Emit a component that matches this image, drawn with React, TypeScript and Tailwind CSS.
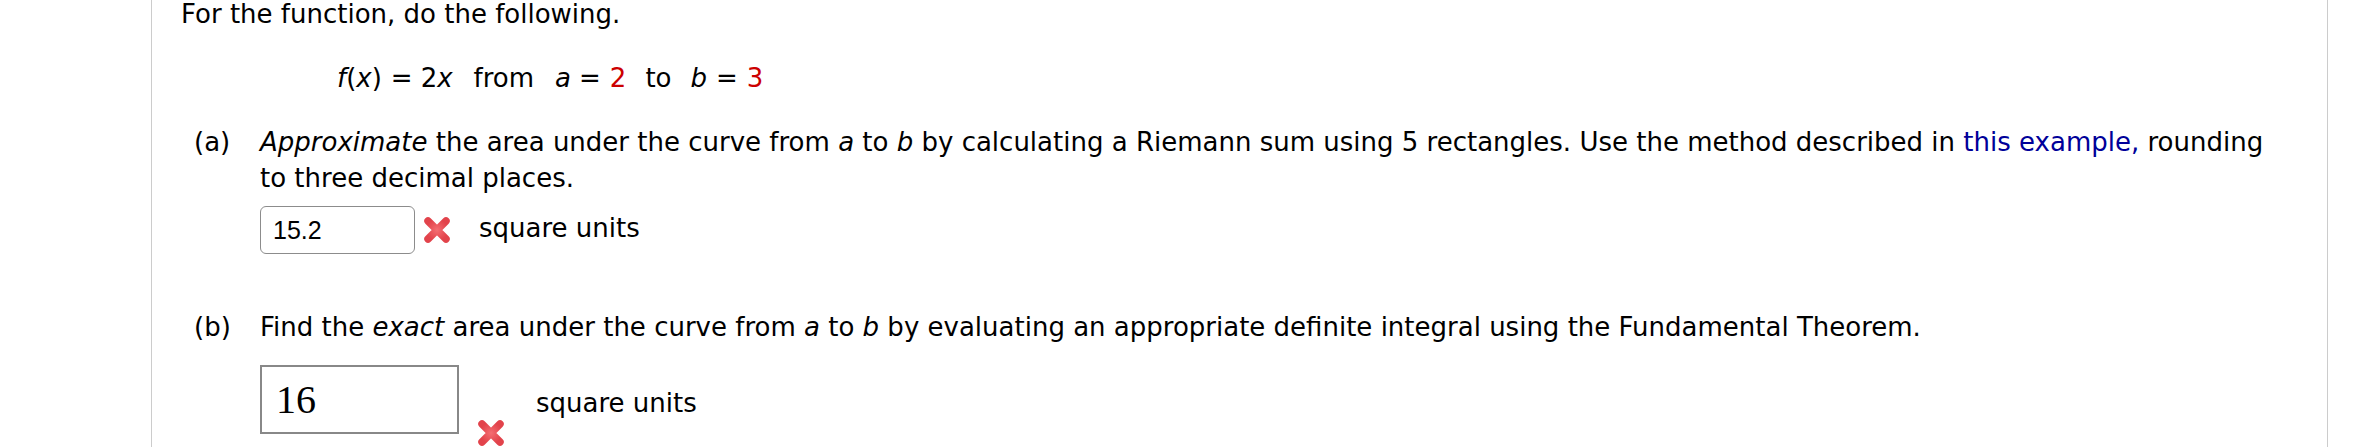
import React from 'react';

function WrongMark({ className = '' }: { className?: string }) {
  return (
    <svg viewBox="0 0 30 30" className={className} aria-hidden>
      <defs>
        <radialGradient id="xg" cx="50%" cy="50%" r="60%">
          <stop offset="0%" stopColor="#f46e72" />
          <stop offset="100%" stopColor="#e2434b" />
        </radialGradient>
      </defs>
      <path d="M6 6 L24 24 M24 6 L6 24" stroke="url(#xg)" strokeWidth="7.5" strokeLinecap="round" fill="none" />
    </svg>
  );
}

const I = ({ children }: { children: React.ReactNode }) => <i className="italic">{children}</i>;

export default function App() {
  return (
    <div className="w-[2360px] h-[447px] bg-white overflow-hidden text-black font-['DejaVu_Sans','Verdana',sans-serif] text-[26px]">
      <div className="ml-[151px] w-[2177px] h-full border-x border-[#cccccc] pl-[29px]">
        {/* prompt */}
        <p className="leading-[28px]">For the function, do the following.</p>

        {/* function */}
        <div className="mt-[36px] ml-[156px] leading-[28px] flex items-baseline">
          <span><I>f</I>(<I>x</I>)</span>
          <span className="ml-[9px]">=</span>
          <span className="ml-[8px]">2<I>x</I></span>
          <span className="ml-[21px]">from</span>
          <span className="ml-[21px]"><I>a</I></span>
          <span className="ml-[8px]">=</span>
          <span className="ml-[9px] text-[#cc0000]">2</span>
          <span className="ml-[19px]">to</span>
          <span className="ml-[19px]"><I>b</I></span>
          <span className="ml-[9px]">=</span>
          <span className="ml-[9px] text-[#cc0000]">3</span>
        </div>

        {/* part a */}
        <div className="mt-[32px] flex leading-[36px]">
          <span className="w-[79px] pl-[13px] shrink-0">(a)</span>
          <div className="w-[2040px]">
            <p>
              <I>Approximate</I> the area under the curve from <I>a</I> to <I>b</I> by calculating a Riemann sum using 5 rectangles. Use the method described in{' '}
              <a className="text-[#000099]">this example,</a> rounding
              <br />
              to three decimal places.
            </p>
            <div className="mt-[10px] flex items-center">
              <div className="w-[155px] h-[48px] border-[1.5px] border-[#8c8c8c] rounded-[6px] flex items-center pl-[12px] font-['Liberation_Sans',Arial,sans-serif] text-[25px] leading-none">
                15.2
              </div>
              <WrongMark className="w-[30px] h-[30px] ml-[7px]" />
              <span className="ml-[27px] leading-none -mt-[4px]">square units</span>
            </div>
          </div>
        </div>

        {/* part b */}
        <div className="mt-[57px] flex leading-[32px]">
          <span className="w-[79px] pl-[13px] shrink-0">(b)</span>
          <div>
            <p>
              Find the <I>exact</I> area under the curve from <I>a</I> to <I>b</I> by evaluating an appropriate definite integral using the Fundamental Theorem.
            </p>
            <div className="mt-[22px] flex items-start">
              <div className="w-[199px] h-[69px] border-2 border-[#888888] flex items-center pl-[14px] font-['Liberation_Serif','Times_New_Roman',serif] text-[40px] leading-none">
                16
              </div>
              <WrongMark className="w-[30px] h-[30px] ml-[17px] mt-[53px]" />
              <span className="ml-[30px] mt-[25px] leading-none">square units</span>
            </div>
          </div>
        </div>
      </div>
    </div>
  );
}
